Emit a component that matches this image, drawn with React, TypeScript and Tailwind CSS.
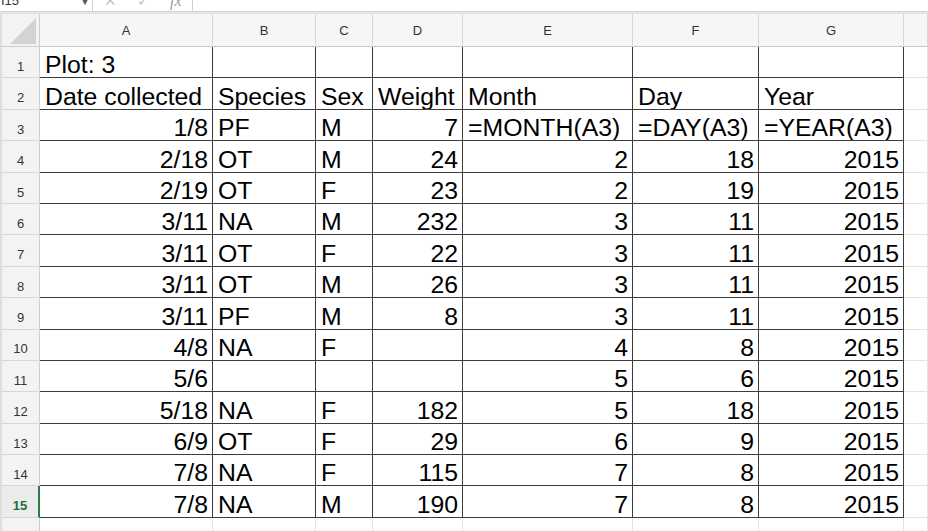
import React from 'react';

const cols = ['A', 'B', 'C', 'D', 'E', 'F', 'G', ''];

const rows: string[][] = [
  ['Plot: 3', '', '', '', '', '', ''],
  ['Date collected', 'Species', 'Sex', 'Weight', 'Month', 'Day', 'Year'],
  ['1/8', 'PF', 'M', '7', '=MONTH(A3)', '=DAY(A3)', '=YEAR(A3)'],
  ['2/18', 'OT', 'M', '24', '2', '18', '2015'],
  ['2/19', 'OT', 'F', '23', '2', '19', '2015'],
  ['3/11', 'NA', 'M', '232', '3', '11', '2015'],
  ['3/11', 'OT', 'F', '22', '3', '11', '2015'],
  ['3/11', 'OT', 'M', '26', '3', '11', '2015'],
  ['3/11', 'PF', 'M', '8', '3', '11', '2015'],
  ['4/8', 'NA', 'F', '', '4', '8', '2015'],
  ['5/6', '', '', '', '5', '6', '2015'],
  ['5/18', 'NA', 'F', '182', '5', '18', '2015'],
  ['6/9', 'OT', 'F', '29', '6', '9', '2015'],
  ['7/8', 'NA', 'F', '115', '7', '8', '2015'],
  ['7/8', 'NA', 'M', '190', '7', '8', '2015'],
];

const isNum = (v: string) => /^[\d/]+$/.test(v);

function FormulaBar() {
  return (
    <div className="h-[12px] overflow-hidden border-b border-[#d4d4d4] bg-white relative">
      <div className="flex items-center h-[20px] -mt-[9px] text-[13px] text-[#333]">
        <span className="w-[80px] pl-[1px]">I15</span>
        <span className="text-[10px] text-[#555] w-[12px]">▼</span>
        <span className="w-px h-[20px] bg-[#cfcfcf]" />
        <span className="ml-[11px] text-[#c4c4c4] text-[15px]">✕</span>
        <span className="ml-[20px] text-[#c4c4c4] text-[15px]">✓</span>
        <span className="ml-[20px] text-[#9a9a9a] italic font-['Liberation_Serif',serif] text-[16px]">fx</span>
        <span className="ml-[10px] w-px h-[20px] bg-[#cfcfcf]" />
      </div>
    </div>
  );
}

export default function App() {
  return (
    <div className="w-[928px] h-[531px] overflow-hidden bg-white font-['Liberation_Sans',Arial,sans-serif]">
      <FormulaBar />
      <div className="h-[2px] bg-[#e4e4e4]" />
      <div className="grid grid-cols-[40px_173px_103px_57px_90px_170px_126px_145px_1fr] grid-rows-[33px_repeat(15,31.4px)_40px]">
        {/* corner */}
        <div className="bg-[#f3f3f3] border-r border-b border-[#cdcdcd] border-l-2 border-l-[#dedede] relative">
          <svg className="absolute right-[3px] bottom-[2px]" width="26" height="26" viewBox="0 0 26 26">
            <polygon points="26,0 26,26 0,26" fill="#d3d3d3" />
          </svg>
        </div>
        {cols.map((c, i) => (
          <div key={'h' + i} className="bg-[#f6f6f6] border-r border-b border-[#d6d6d6] border-b-[#cbcbcb] flex items-center justify-center text-[13px] text-[#333] pt-[1px]">
            {c}
          </div>
        ))}

        {rows.map((r, ri) => {
          const active = ri === 14;
          return (
            <React.Fragment key={'r' + ri}>
              <div className={active
                ? 'bg-[#ececec] border-b border-[#d6d6d6] border-r-2 border-r-[#2c7a45] border-l-2 border-l-[#dedede] flex items-center justify-center pt-[9px] text-[13px] font-bold text-[#1f6e37]'
                : 'bg-[#f3f3f3] border-b border-[#d6d6d6] border-r border-r-[#cdcdcd] border-l-2 border-l-[#dedede] flex items-center justify-center pt-[9px] text-[13px] text-[#333]'}>
                {ri + 1}
              </div>
              {r.map((v, ci) => (
                <div
                  key={ci}
                  className={(isNum(v) ? 'justify-end pr-[4px] ' : 'justify-start pl-[5px] ') +
                    'flex items-end border-r border-b border-[#3c3c3c] text-[24.8px] text-black whitespace-nowrap overflow-hidden'}
                >
                  <span className="block leading-[25px]">{v}</span>
                </div>
              ))}
              <div className="border-r border-b border-[#e2e2e2]" />
            </React.Fragment>
          );
        })}

        {/* row 16 */}
        <div className="bg-[#f3f3f3] border-r border-[#cdcdcd] border-l-2 border-l-[#dedede]" />
        {cols.map((_, i) => (
          <div key={'e' + i} className="border-r border-[#e2e2e2]" />
        ))}
      </div>
    </div>
  );
}
